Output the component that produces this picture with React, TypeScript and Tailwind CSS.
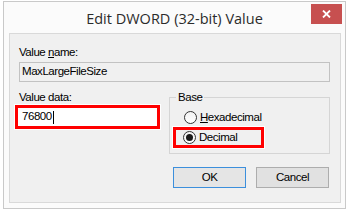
import React from 'react';

const ui = { fontFamily: '"Liberation Sans", Arial, sans-serif' };

const Radio: React.FC<{ checked?: boolean }> = ({ checked }) => (
  <span className="flex h-[13px] w-[13px] items-center justify-center rounded-full border border-[#333] bg-gradient-to-b from-[#f2f2f2] to-white">
    {checked && <span className="h-[7px] w-[7px] rounded-full bg-[#1a1a1a]" />}
  </span>
);

const App: React.FC = () => {
  return (
    <div className="h-[211px] w-[349px] overflow-hidden bg-white pt-[1px] text-[11.5px] tracking-[-0.45px] text-black" style={ui}>
      {/* window frame */}
      <div className="relative ml-[3px] h-[208px] w-[343px] border border-[#c9c9c9] bg-[#fbfbfb]">
        <div className="flex h-[31px] items-center justify-center pt-[2px] text-[14.5px] tracking-normal text-[#2b2b2b]" style={{ fontFamily: '"Open Sans", "Noto Sans", sans-serif' }}>
          Edit DWORD (32-bit) Value
        </div>
        <button className="absolute right-[3px] top-[2px] flex h-[20px] w-[31px] items-center justify-center bg-[#c75050]">
          <svg width="9" height="8" viewBox="0 0 9 8">
            <path d="M1 0.5 L8 7.5 M8 0.5 L1 7.5" stroke="#fff" strokeWidth="1.8" />
          </svg>
        </button>

        {/* client area */}
        <div className="ml-[5px] h-[170px] w-[332px] border border-[#d9d9d9] bg-[#f0f0f0]">
          <div className="ml-[9px] mt-[11px] leading-[15px]">
            Value <span className="underline">n</span>ame:
          </div>
          <div className="ml-[9px] mt-[2px] flex h-[20px] w-[311px] items-center border border-[#c2c2c2] bg-[#f0f0f0] pl-[2px]">
            MaxLargeFileSize
          </div>

          <div className="mt-[8px] flex items-start">
            <div className="ml-[5px] w-[145px]">
              <div className="pl-[4px] leading-[15px]">Value data:</div>
              <div className="flex h-[24px] items-center border-[3px] border-[#f00] bg-white pl-[4px] shadow-[0_0_0_1px_#fff]">
                76800
                <span className="ml-[1px] inline-block h-[13px] w-[1px] bg-black" />
              </div>
            </div>

            <fieldset className="ml-[9px] h-[64px] w-[161px] border border-[#d5d5d5] px-0 pb-0">
              <legend className="ml-[6px] px-[2px] leading-[15px]">Base</legend>
              <div className="ml-[14px] mt-[5px] flex h-[15px] items-center gap-[3px] leading-[15px]">
                <Radio />
                <span><span className="underline">H</span>exadecimal</span>
              </div>
              <div className="ml-[3px] mt-[2px] flex h-[21px] w-[91px] items-center gap-[3px] border-[3px] border-[#f00] pl-[7px] shadow-[0_0_0_1px_#fff]">
                <Radio checked />
                <span>Decimal</span>
              </div>
            </fieldset>
          </div>

          <div className="mr-[11px] mt-[13px] flex justify-end gap-[10px]">
            <button className="h-[21px] w-[73px] border border-[#3c8fdc] bg-[#e5e5e5] text-[11.5px]">OK</button>
            <button className="h-[21px] w-[73px] border border-[#adadad] bg-[#e1e1e1] text-[11.5px]">Cancel</button>
          </div>
        </div>
      </div>
    </div>
  );
};

export default App;
